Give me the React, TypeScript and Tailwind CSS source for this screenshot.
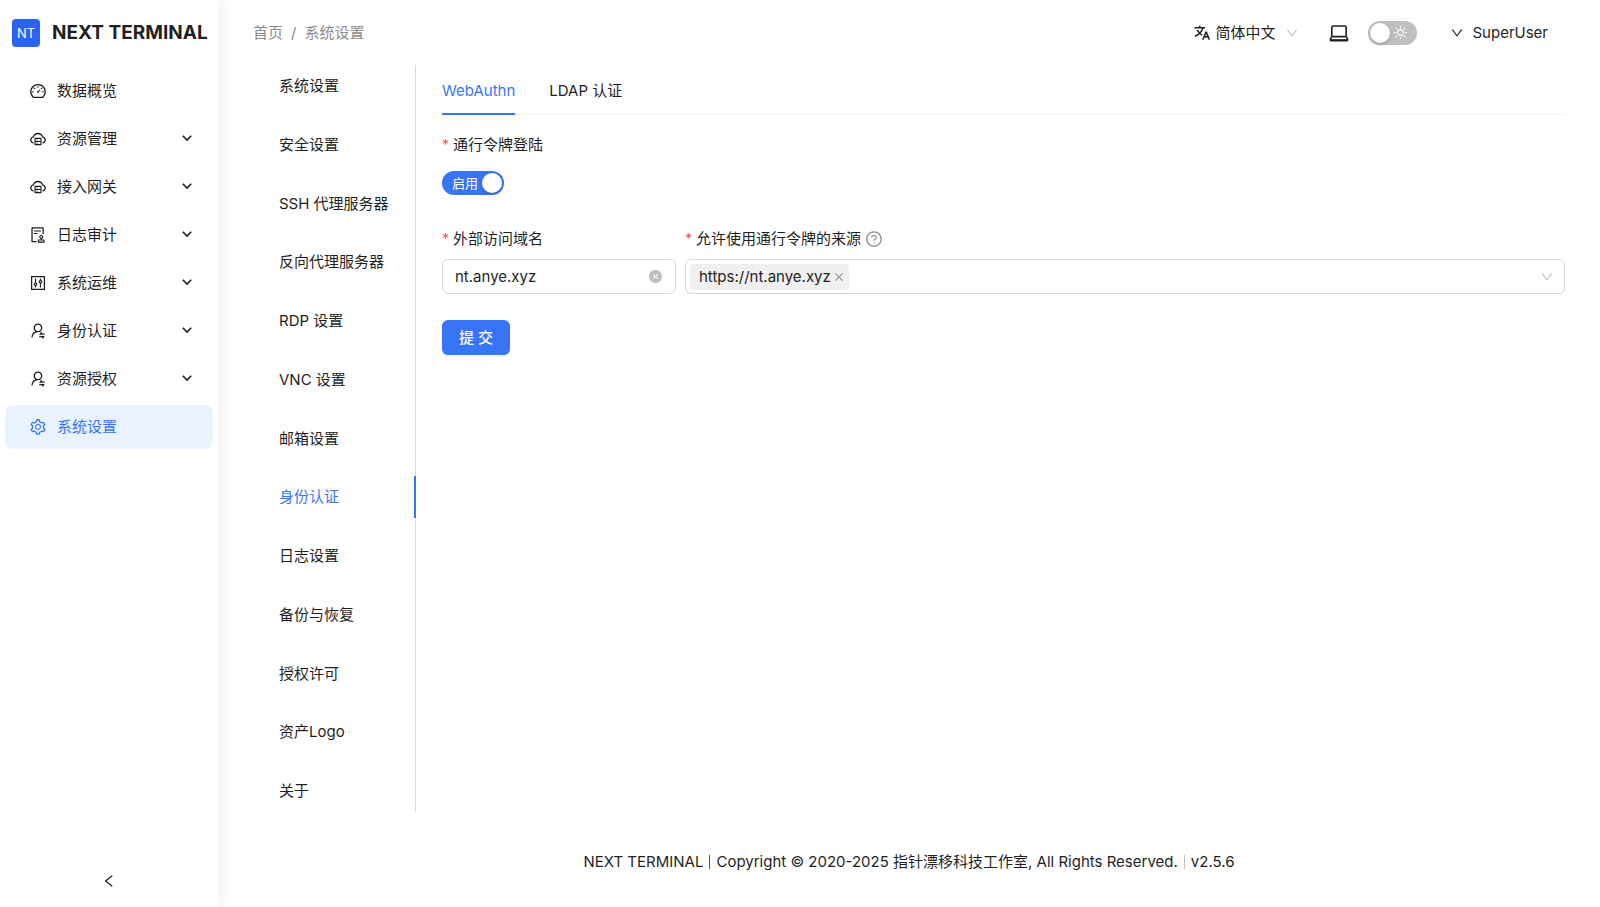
import {
  AiOutlineDashboard, AiOutlineCloudServer, AiOutlineAudit, AiOutlineControl, AiOutlineUserSwitch,
  AiOutlineSetting, AiOutlineDown, AiOutlineLeft, AiOutlineClose,
  AiFillCloseCircle, AiOutlineQuestionCircle, AiOutlineSun,
} from "react-icons/ai";
import type { IconType } from "react-icons";

const menu: { icon: IconType; label: string; sub?: boolean; active?: boolean }[] = [
  { icon: AiOutlineDashboard, label: "数据概览" },
  { icon: AiOutlineCloudServer, label: "资源管理", sub: true },
  { icon: AiOutlineCloudServer, label: "接入网关", sub: true },
  { icon: AiOutlineAudit, label: "日志审计", sub: true },
  { icon: AiOutlineControl, label: "系统运维", sub: true },
  { icon: AiOutlineUserSwitch, label: "身份认证", sub: true },
  { icon: AiOutlineUserSwitch, label: "资源授权", sub: true },
  { icon: AiOutlineSetting, label: "系统设置", active: true },
];

const sections = [
  "系统设置", "安全设置", "SSH 代理服务器", "反向代理服务器", "RDP 设置", "VNC 设置", "邮箱设置",
  "身份认证", "日志设置", "备份与恢复", "授权许可", "资产Logo", "关于",
];
const activeSection = "身份认证";

function MenuChevron() {
  return (
    <svg className="mb-[2px] h-3 w-3" viewBox="0 0 12 12" fill="none" stroke="currentColor" strokeWidth="1.6" aria-hidden="true">
      <path d="M1.8 3.8 6 8l4.2-4.2" />
    </svg>
  );
}

function LanguageIcon() {
  return (
    <svg className="mr-1 h-[18px] w-[18px]" viewBox="0 0 24 24" fill="currentColor" aria-hidden="true">
      <path d="M18.5 10l4.4 11h-2.155l-1.201-3h-4.09l-1.199 3h-2.154L16.5 10h2zm-1 2.885L16.253 16h2.492L17.5 12.885zM10 2v2h6v2h-1.968a18.222 18.222 0 0 1-3.62 6.301 14.864 14.864 0 0 0 2.336 1.707l-.751 1.878A17.015 17.015 0 0 1 9 13.725a16.676 16.676 0 0 1-6.201 3.548l-.536-1.929a14.7 14.7 0 0 0 5.327-3.042A18.078 18.078 0 0 1 4.767 8h2.24A16.032 16.032 0 0 0 9 10.877a16.165 16.165 0 0 0 2.91-4.876L2 6V4h6V2h2z" />
    </svg>
  );
}

function LaptopIcon() {
  return (
    <svg className="ml-[30px] h-5 w-5" viewBox="0 0 20 20" fill="none" stroke="currentColor" strokeWidth="1.6" strokeLinejoin="round" aria-hidden="true">
      <rect x="2.8" y="3" width="14.4" height="10.6" rx="1.4" />
      <path d="M2.8 13.2 1.4 16.4q-.3 1.2.8 1.2h15.6q1.1 0 .8-1.2l-1.4-3.2" />
      <path d="M1.6 17h16.8" />
    </svg>
  );
}

function Sidebar() {
  return (
    <aside className="flex w-[218px] shrink-0 flex-col bg-white shadow-[2px_0_16px_rgba(29,35,41,0.08)]">
      <div className="flex h-16 items-center gap-3 pt-px pl-3">
        <span className="flex h-7 w-7 shrink-0 items-center justify-center rounded-sm bg-[#2b62f6] text-[13px] text-white">NT</span>
        <h1 className="text-[19px] font-bold whitespace-nowrap">NEXT TERMINAL</h1>
      </div>
      <nav className="flex flex-col gap-1 px-[5px] pt-[5px]">
        {menu.map(({ icon: Icon, label, sub, active }) => (
          <a
            key={label}
            href="#"
            className={`flex h-11 items-center rounded-lg pr-5 pl-6 ${active ? "bg-[#e8f3ff] text-[#3875f6]" : ""}`}
          >
            <Icon className="mr-[10px] h-[18px] w-[18px]" />
            <span className="flex-1">{label}</span>
            {sub && <MenuChevron />}
          </a>
        ))}
      </nav>
      <button type="button" aria-label="Collapse menu" className="mt-auto mb-[18px] self-center">
        <AiOutlineLeft className="h-4 w-4" />
      </button>
    </aside>
  );
}

function Header() {
  return (
    <header className="flex h-16 items-center justify-between pt-px pr-[52px] pl-[35px]">
      <nav className="flex gap-2 text-[#8c8c8c]">
        <a href="#">首页</a>
        <span>/</span>
        <a href="#">系统设置</a>
      </nav>
      <div className="flex items-center">
        <button type="button" className="flex items-center">
          <LanguageIcon />
          简体中文
          <AiOutlineDown className="ml-[10px] h-[14px] w-[14px] text-[#bfbfbf]" />
        </button>
        <LaptopIcon />
        <button
          type="button"
          role="switch"
          aria-checked="false"
          aria-label="Dark mode"
          className="ml-[19px] flex h-6 w-[49px] items-center rounded-full bg-[#bfbfbf] px-0.5 text-white"
        >
          <span className="h-5 w-5 rounded-full bg-white shadow-[0_2px_4px_rgba(0,35,11,0.2)]" />
          <AiOutlineSun className="ml-[3px] h-[15px] w-[15px]" />
        </button>
        <button type="button" className="ml-[33px] flex items-center gap-2">
          <AiOutlineDown className="h-[14px] w-[14px]" />
          SuperUser
        </button>
      </div>
    </header>
  );
}

function Required() {
  return <span className="mr-1 text-sm text-[#ff4d4f]">*</span>;
}

function AuthForm() {
  return (
    <section className="min-w-0 flex-1 pr-[35px] pl-[26px]">
      <div role="tablist" className="flex gap-[34px] border-b border-[#f0f0f0]">
        <button type="button" role="tab" aria-selected="true" className="-mb-px h-[50px] border-b-2 border-[#3875f6] pt-[3px] text-[#3875f6]">
          WebAuthn
        </button>
        <button type="button" role="tab" aria-selected="false" className="-mb-px h-[50px] border-b-2 border-transparent pt-[3px]">
          LDAP 认证
        </button>
      </div>
      <form>
        <div className="mt-[18px]">
          <label htmlFor="passkey" className="flex h-6 items-center">
            <Required />通行令牌登陆
          </label>
          <button
            id="passkey"
            type="button"
            role="switch"
            aria-checked="true"
            className="mt-[14px] flex h-6 w-[62px] items-center justify-between rounded-full bg-[#3875f6] pr-0.5 pl-[10px] text-[13px] text-white"
          >
            启用
            <span className="h-5 w-5 rounded-full bg-white shadow-[0_2px_4px_rgba(0,35,11,0.2)]" />
          </button>
        </div>
        <div className="mt-8 flex gap-[9px]">
          <div className="w-[234px]">
            <label htmlFor="domain" className="flex h-6 items-center">
              <Required />外部访问域名
            </label>
            <div className="mt-2 flex h-[35px] items-center rounded-md border border-[#d9d9d9] px-3">
              <input id="domain" defaultValue="nt.anye.xyz" className="min-w-0 flex-1 outline-none" />
              <button type="button" aria-label="Clear">
                <AiFillCloseCircle className="h-[15px] w-[15px] text-[#bfbfbf]" />
              </button>
            </div>
          </div>
          <div className="min-w-0 flex-1">
            <label htmlFor="origins" className="flex h-6 items-center">
              <Required />允许使用通行令牌的来源
              <AiOutlineQuestionCircle className="ml-1 h-[18px] w-[18px] text-[#8c8c8c]" />
            </label>
            <div className="mt-2 flex h-[35px] items-center rounded-md border border-[#d9d9d9] pr-[10px] pl-1">
              <span className="flex h-[26px] items-center gap-0.5 rounded bg-[#f0f0f0] pr-1 pl-[9px]">
                https://nt.anye.xyz
                <button type="button" aria-label="Remove">
                  <AiOutlineClose className="h-3 w-3 text-[#8c8c8c]" />
                </button>
              </span>
              <input id="origins" role="combobox" aria-expanded="false" className="min-w-0 flex-1 outline-none" />
              <AiOutlineDown className="h-[14px] w-[14px] text-[#bfbfbf]" />
            </div>
          </div>
        </div>
        <button
          type="submit"
          className="mt-[26px] h-[35px] rounded-md bg-[#3875f6] px-[17px] font-medium text-white shadow-[0_2px_0_rgba(5,145,255,0.1)]"
        >
          提 交
        </button>
      </form>
    </section>
  );
}

export default function App() {
  return (
    <div className="flex min-h-screen bg-white font-[Inter,'Noto_Sans_CJK_SC',sans-serif] text-[15px] leading-6 text-[#1f1f1f]">
      <Sidebar />
      <div className="flex min-w-0 flex-1 flex-col">
        <Header />
        <main className="flex pt-px">
          <nav className="ml-[35px] flex min-h-[747px] w-[163px] shrink-0 flex-col justify-between border-r border-[#d9d9d9]">
            {sections.map((name) => (
              <a
                key={name}
                href="#"
                className={`-mr-px flex h-[42px] items-center border-r-2 pl-[26px] ${
                  name === activeSection ? "border-[#3875f6] text-[#3875f6]" : "border-transparent"
                }`}
              >
                {name}
              </a>
            ))}
          </nav>
          <AuthForm />
        </main>
        <footer className="mt-[38px] flex items-center justify-center">
          NEXT TERMINAL
          <span className="mx-[6px] h-[14px] w-px bg-[#595959]" />
          Copyright © 2020-2025 指针漂移科技工作室, All Rights Reserved.
          <span className="mx-[6px] h-[14px] w-px bg-[#bfbfbf]" />
          v2.5.6
        </footer>
      </div>
    </div>
  );
}
